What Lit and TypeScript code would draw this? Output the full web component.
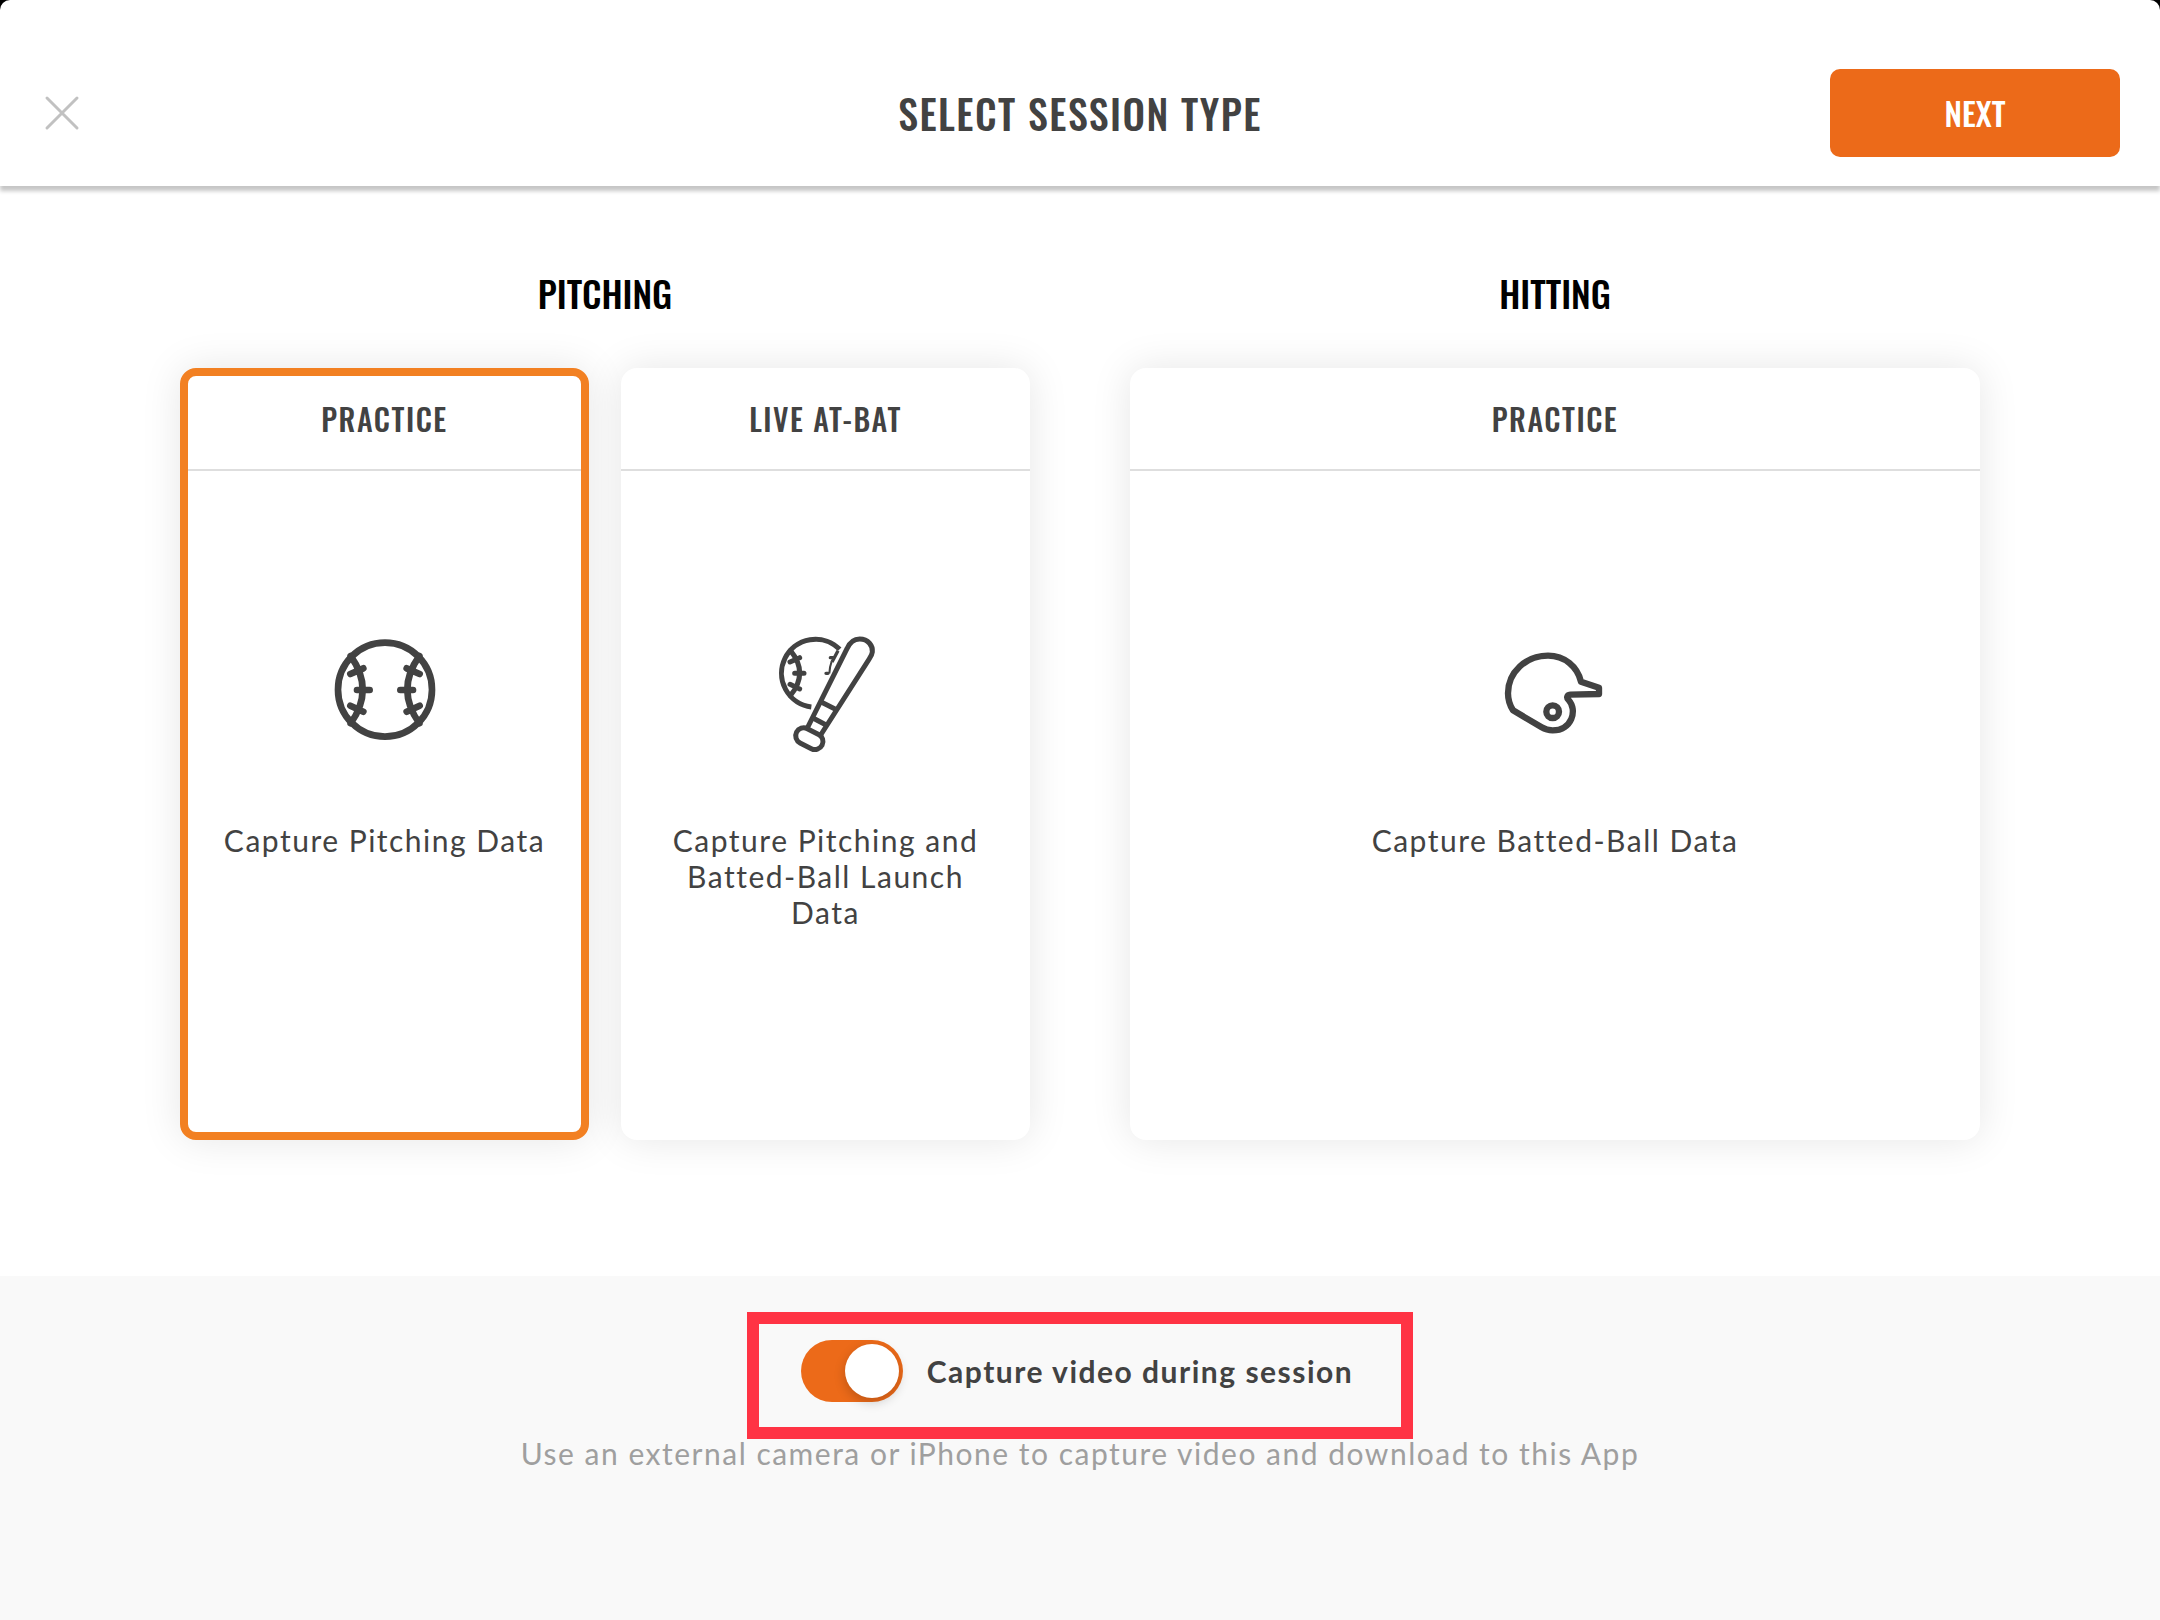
import { LitElement, html, css, svg } from "lit";
import { customElement, state } from "lit/decorators.js";
import { classMap } from "lit/directives/class-map.js";

const stitches = svg`
  <path d="M92 108Q164 209 92 310M91 162L130 145M111 210H149M91 257L130 275" />
`;

const ballIcon = svg`
  <svg class="icon" viewBox="0 0 390 420" stroke-width="20" aria-hidden="true">
    <circle cx="195" cy="209" r="141" />
    ${stitches}
    <g transform="matrix(-1 0 0 1 390 0)">${stitches}</g>
  </svg>
`;

const batIcon = svg`
  <svg class="icon" viewBox="0 0 390 420" stroke-width="15" aria-hidden="true">
    <path stroke-linecap="butt" d="M236 88A102 102 0 1 0 151 261" />
    <path d="M88 91Q144 159 88 227M87 126L116 113M101 160H129M87 193L116 207" />
    <path stroke-linecap="butt" stroke-width="10" d="M231 92L213 126" />
    <path stroke-linecap="butt" stroke-width="6" d="M212 124Q206 140 205 160" />
    <path stroke-width="10" d="M208 113H216M195 160H201" />
    <path d="M139 324L258 86C266 68 278 57 296 57C322 57 336 78 334 96C333 106 328 112 322 121L179 345" />
    <path d="M182 247L222 267M160 296L194 314" />
    <rect x="102" y="332" width="86" height="48" rx="24" transform="rotate(27 145 356)" />
  </svg>
`;

const helmetIcon = svg`
  <svg class="icon" viewBox="0 -30 390 420" stroke-width="19" aria-hidden="true">
    <path d="M69 241C58 224 54 207 54 190C54 126 108 77 174 77C224 77 262 110 273 155L327 173V192L241 194C230 195 229 204 236 210C263 240 246 301 188 301C176 301 165 298 155 292Z" />
    <circle cx="188" cy="245" r="19" />
  </svg>
`;

const groups = [
  {
    title: "PITCHING",
    cards: [
      { id: "pitching-practice", title: "PRACTICE", icon: ballIcon, text: "Capture Pitching Data" },
      { id: "live-at-bat", title: "LIVE AT-BAT", icon: batIcon, text: "Capture Pitching and Batted-Ball Launch Data" },
    ],
  },
  {
    title: "HITTING",
    cards: [
      { id: "hitting-practice", title: "PRACTICE", icon: helmetIcon, text: "Capture Batted-Ball Data" },
    ],
  },
];

@customElement("app-root")
export class AppRoot extends LitElement {
  @state() selected = "pitching-practice";
  @state() video = true;

  static styles = css`
    :host {
      display: block;
      background: #000;
      color: #424242;
      font-family: Lato, "Open Sans", sans-serif;
      font-size: 30px;
      line-height: 36px;
      letter-spacing: 0.05em;
    }
    * {
      box-sizing: border-box;
    }
    .sheet {
      display: flex;
      flex-direction: column;
      min-height: 100vh;
      border-radius: 10px 10px 0 0;
      background: #fff;
      overflow: hidden;
    }
    .header {
      display: grid;
      grid-template-columns: 1fr auto 1fr;
      align-items: center;
      padding: 69px 40px 29px;
      box-shadow: 0 5px 4px #c6c6c6;
    }
    .heading {
      margin: 0;
      font-family: Oswald, "Roboto Condensed", "Liberation Sans Narrow", sans-serif;
      font-weight: 500;
    }
    .title {
      font-size: 40px;
      line-height: 60px;
    }
    .close {
      justify-self: start;
      display: flex;
      padding: 4px;
      border: 0;
      background: none;
    }
    .close svg {
      width: 36px;
      height: 36px;
      stroke: #c1c1c1;
      stroke-width: 3;
      stroke-linecap: round;
    }
    .next {
      justify-self: end;
      width: 290px;
      height: 88px;
      padding: 0 0 2px;
      border: 0;
      border-radius: 10px;
      background: #ec6a19;
      color: #fff;
      font-size: 32px;
      letter-spacing: 0;
    }
    .main {
      flex: 1;
      display: grid;
      grid-template-columns: 1fr 1fr;
      gap: 100px;
      padding: 77px 180px 136px;
    }
    .group {
      display: flex;
      flex-direction: column;
      gap: 45px;
      text-align: center;
    }
    .group-title {
      color: #000;
      font-size: 36px;
      line-height: 60px;
      letter-spacing: 0;
    }
    .cards {
      flex: 1;
      display: flex;
      gap: 32px;
    }
    .card {
      flex: 1;
      position: relative;
      display: flex;
      flex-direction: column;
      border-radius: 16px;
      background: #fff;
      box-shadow: 0 0 40px rgba(0, 0, 0, 0.1);
      cursor: pointer;
    }
    .card.selected::after {
      content: "";
      position: absolute;
      inset: 0;
      border: 8px solid #f28022;
      border-radius: 16px;
    }
    .card input {
      position: absolute;
      opacity: 0;
    }
    .card-title {
      padding: 27px 0 26px;
      border-bottom: 2px solid #dedede;
      font-size: 30px;
      line-height: 48px;
    }
    .card-body {
      display: flex;
      flex-direction: column;
      align-items: center;
      gap: 62px;
      padding: 149px 32px 40px;
    }
    .icon {
      width: 130px;
      height: 140px;
      fill: none;
      stroke: #424242;
      stroke-linecap: round;
      stroke-linejoin: round;
    }
    .footer {
      display: flex;
      flex-direction: column;
      align-items: center;
      min-height: 344px;
      padding: 36px 40px;
      background: #f9f9f9;
    }
    .video {
      display: flex;
      align-items: center;
      gap: 24px;
      padding: 16px 48px 25px 42px;
      border: 12px solid #ff3344;
      font-weight: 700;
      cursor: pointer;
    }
    .switch {
      appearance: none;
      display: flex;
      width: 102px;
      height: 62px;
      margin: 0;
      padding: 4px;
      border-radius: 31px;
      background: #cfcfcf;
    }
    .switch::before {
      content: "";
      width: 54px;
      height: 54px;
      border-radius: 50%;
      background: #fff;
      box-shadow: 0 4px 12px rgba(0, 0, 0, 0.2);
    }
    .switch:checked {
      justify-content: flex-end;
      background: #ec6a19;
    }
    .hint {
      margin: 0;
      color: #9f9f9f;
      line-height: 28px;
    }
  `;

  render() {
    return html`
      <div class="sheet">
        <header class="header">
          <button class="close" type="button" aria-label="Close">
            <svg viewBox="0 0 36 36" aria-hidden="true"><path d="M3 3L33 33M33 3L3 33" /></svg>
          </button>
          <h1 class="heading title">SELECT SESSION TYPE</h1>
          <button class="heading next" type="button">NEXT</button>
        </header>
        <main class="main">
          ${groups.map(
            (group) => html`
              <section class="group">
                <h2 class="heading group-title">${group.title}</h2>
                <div class="cards">
                  ${group.cards.map(
                    (card) => html`
                      <label class=${classMap({ card: true, selected: card.id === this.selected })}>
                        <input
                          type="radio"
                          name="session"
                          .checked=${card.id === this.selected}
                          @change=${() => (this.selected = card.id)}
                        />
                        <span class="heading card-title">${card.title}</span>
                        <span class="card-body">${card.icon}<span>${card.text}</span></span>
                      </label>
                    `
                  )}
                </div>
              </section>
            `
          )}
        </main>
        <footer class="footer">
          <label class="video">
            <input
              class="switch"
              type="checkbox"
              role="switch"
              .checked=${this.video}
              @change=${() => (this.video = !this.video)}
            />
            <span>Capture video during session</span>
          </label>
          <p class="hint">Use an external camera or iPhone to capture video and download to this App</p>
        </footer>
      </div>
    `;
  }
}
